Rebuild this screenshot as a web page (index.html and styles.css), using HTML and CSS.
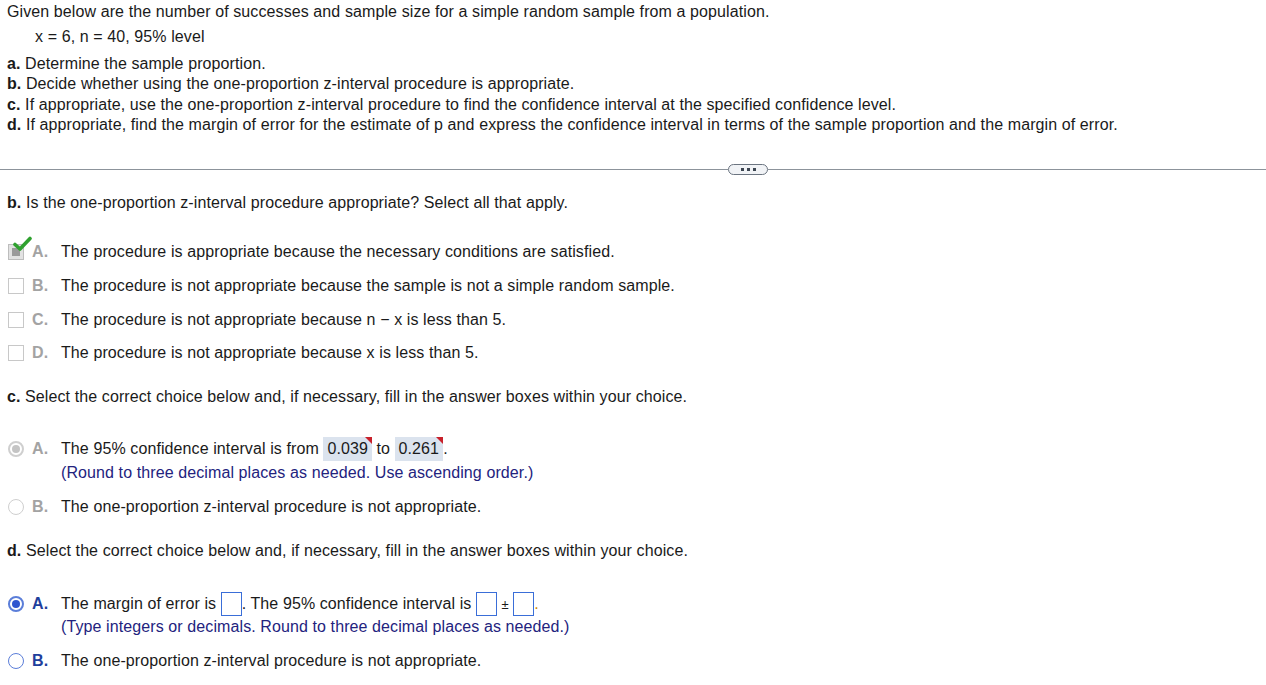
FILE: index.html
```html
<!DOCTYPE html>
<html>
<head>
<meta charset="utf-8">
<link rel="stylesheet" href="styles.css">
</head>
<body>
<div class="top">
  <p class="intro">Given below are the number of successes and sample size for a simple random sample from a population.</p>
  <p class="given">x = 6, n = 40, 95% level</p>
  <ul class="parts">
    <li><b>a.</b> Determine the sample proportion.</li>
    <li><b>b.</b> Decide whether using the one-proportion z-interval procedure is appropriate.</li>
    <li><b>c.</b> If appropriate, use the one-proportion z-interval procedure to find the confidence interval at the specified confidence level.</li>
    <li><b>d.</b> If appropriate, find the margin of error for the estimate of p and express the confidence interval in terms of the sample proportion and the margin of error.</li>
  </ul>
</div>
<div class="divider">
  <span class="line"></span>
  <span class="more"><i></i><i></i><i></i></span>
  <span class="line"></span>
</div>
<div class="bottom">
  <p class="q q-b"><b>b.</b> Is the one-proportion z-interval procedure appropriate? Select all that apply.</p>
  <div class="opts opts-b">
    <div class="opt">
      <span class="ctl"><span class="cb cb-on"><span class="cb-in"></span></span><svg class="tick" width="20" height="16" viewBox="0 0 20 16"><path d="M3 8.5 L8 13 L18 2.5" fill="none" stroke="#2fa12f" stroke-width="3.6" stroke-linecap="round" stroke-linejoin="round"/></svg></span>
      <span class="let">A.</span><span class="txt">The procedure is appropriate because the necessary conditions are satisfied.</span>
    </div>
    <div class="opt">
      <span class="ctl"><span class="cb"></span></span>
      <span class="let">B.</span><span class="txt">The procedure is not appropriate because the sample is not a simple random sample.</span>
    </div>
    <div class="opt">
      <span class="ctl"><span class="cb"></span></span>
      <span class="let">C.</span><span class="txt">The procedure is not appropriate because n − x is less than 5.</span>
    </div>
    <div class="opt">
      <span class="ctl"><span class="cb"></span></span>
      <span class="let">D.</span><span class="txt">The procedure is not appropriate because x is less than 5.</span>
    </div>
  </div>

  <p class="q q-c"><b>c.</b> Select the correct choice below and, if necessary, fill in the answer boxes within your choice.</p>
  <div class="opts opts-c">
    <div class="opt opt-multi">
      <span class="ctl"><span class="rd rd-dis"></span></span>
      <span class="let">A.</span>
      <div class="txt">
        <div class="row">The 95% confidence interval is from <span class="ans">0.039</span> to <span class="ans">0.261</span>.</div>
        <div class="hint">(Round to three decimal places as needed. Use ascending order.)</div>
      </div>
    </div>
    <div class="opt">
      <span class="ctl"><span class="rd rd-off-dis"></span></span>
      <span class="let">B.</span><span class="txt">The one-proportion z-interval procedure is not appropriate.</span>
    </div>
  </div>

  <p class="q q-d"><b>d.</b> Select the correct choice below and, if necessary, fill in the answer boxes within your choice.</p>
  <div class="opts opts-d">
    <div class="opt opt-multi">
      <span class="ctl"><span class="rd rd-sel"></span></span>
      <span class="let let-act">A.</span>
      <div class="txt">
        <div class="row">The margin of error is <span class="box"></span>. The 95% confidence interval is <span class="box"></span> <span class="pm">±</span> <span class="box"></span><span class="dot">.</span></div>
        <div class="hint">(Type integers or decimals. Round to three decimal places as needed.)</div>
      </div>
    </div>
    <div class="opt">
      <span class="ctl"><span class="rd rd-act"></span></span>
      <span class="let let-act">B.</span><span class="txt">The one-proportion z-interval procedure is not appropriate.</span>
    </div>
  </div>
</div>
</body>
</html>
```
FILE: styles.css
```css
html, body {
  margin: 0;
  padding: 0;
  background: #fff;
}
body {
  font-family: "Liberation Sans", Arial, sans-serif;
  font-size: 16px;
  letter-spacing: 0.1px;
  color: #1a1a1a;
  width: 1266px;
  height: 685px;
  overflow: hidden;
}
p { margin: 0; }
b { font-weight: bold; }

.top {
  padding: 3px 0 0 7px;
}
.intro { line-height: 18px; }
.given {
  line-height: 18px;
  margin: 7px 0 0 28px;
}
.parts {
  list-style: none;
  margin: 8px 0 0 0;
  padding: 0;
}
.parts li {
  line-height: 20.3px;
}

.divider {
  display: flex;
  align-items: center;
  margin-top: 28px;
  height: 12px;
}
.divider .line {
  flex: 1;
  height: 1px;
  background: #8c939b;
}
.divider .line:first-child { flex: 0 0 728px; }
.more {
  width: 38px;
  height: 9px;
  border: 1px solid #6b7480;
  border-radius: 6px;
  background: #f1f3f6;
  display: flex;
  align-items: center;
  justify-content: center;
  gap: 3px;
}
.more i {
  width: 3px;
  height: 3px;
  background: #3d4652;
  display: block;
}

.bottom {
  padding-left: 7px;
}
.q-b {
  line-height: 18px;
  margin-top: 19px;
}
.opts { display: flex; flex-direction: column; }
.opts-b { margin-top: 31px; gap: 15.7px; }
.opt {
  display: flex;
  align-items: flex-start;
  line-height: 18px;
}
.ctl {
  position: relative;
  width: 25px;
  height: 18px;
  flex: 0 0 25px;
  display: flex;
  align-items: center;
}
.let {
  width: 29px;
  flex: 0 0 29px;
  font-weight: bold;
  color: #a3a3a3;
}
.let-act { color: #1f3f9c; }

.cb {
  width: 14px;
  height: 14px;
  border: 1px solid #c8c8c8;
  margin-left: 1px;
  background: #fff;
  box-sizing: content-box;
  display: flex;
  align-items: center;
  justify-content: center;
}
.cb-on {
  background: #e2e2e2;
  border-color: #bdbdbd;
}
.cb-in {
  width: 8px;
  height: 8px;
  background: #9a9a9a;
}
.tick {
  position: absolute;
  left: 5px;
  top: -7px;
}

.q-c { margin-top: 26px; line-height: 18px; }
.opts-c { margin-top: 34px; gap: 16px; }
.opt-multi .txt { display: flex; flex-direction: column; }
.row { line-height: 18px; }
.hint {
  color: #23237e;
  line-height: 18px;
  margin-top: 6px;
}
.ans {
  display: inline-block;
  background: #dbe3ee;
  padding: 3px 4px;
  line-height: 18px;
  margin: -3px 0;
  position: relative;
  color: #1a1a1a;
}
.ans::after {
  content: "";
  position: absolute;
  right: 0;
  top: 0;
  border-top: 7px solid #c8202a;
  border-left: 7px solid transparent;
}

.rd {
  width: 16px;
  height: 16px;
  border-radius: 50%;
  box-sizing: border-box;
  margin-left: 1px;
  position: relative;
  display: flex;
  align-items: center;
  justify-content: center;
}
.rd-dis { border: 2px solid #cfcfcf; }
.rd-dis::after {
  content: "";
  width: 8px; height: 8px;
  border-radius: 50%;
  background: #c4c4c4;
}
.rd-off-dis { border: 1.5px solid #cfcfcf; }
.rd-sel { border: 2px solid #5b7ed9; }
.rd-sel::after {
  content: "";
  width: 8px; height: 8px;
  border-radius: 50%;
  background: #2f55cf;
}
.rd-act { border: 1.5px solid #5b7ed9; }

.q-d { margin-top: 26px; line-height: 18px; }
.opts-d { margin-top: 35px; gap: 16px; }
.opts-d .hint { margin-top: 4px; }
.box {
  display: inline-block;
  width: 19px;
  height: 22px;
  border: 1px solid #3a6ed8;
  vertical-align: middle;
  margin: -5px 0 -3px 0;
  box-sizing: content-box;
}
.pm { font-size: 13px; }
.dot { color: #d08a00; }
```
